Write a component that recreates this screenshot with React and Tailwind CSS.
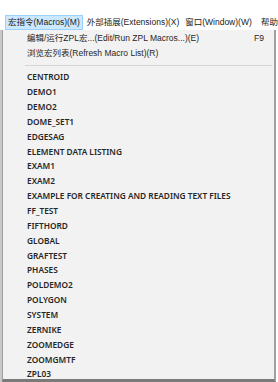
const macros = [
  'CENTROID',
  'DEMO1',
  'DEMO2',
  'DOME_SET1',
  'EDGESAG',
  'ELEMENT DATA LISTING',
  'EXAM1',
  'EXAM2',
  'EXAMPLE FOR CREATING AND READING TEXT FILES',
  'FF_TEST',
  'FIFTHORD',
  'GLOBAL',
  'GRAFTEST',
  'PHASES',
  'POLDEMO2',
  'POLYGON',
  'SYSTEM',
  'ZERNIKE',
  'ZOOMEDGE',
  'ZOOMGMTF',
  'ZPL03',
];

const uiFont = { fontFamily: '"Liberation Sans", "Noto Sans CJK SC", sans-serif' };
const listFont = { fontFamily: '"Noto Sans", "Noto Sans CJK SC", sans-serif' };

export default function App() {
  return (
    <div className="w-[278px] h-[382px] bg-white overflow-hidden text-[#1b1b1b]" style={uiFont}>
      {/* top gap */}
      <div className="h-[15px] bg-white" />

      {/* Menu bar */}
      <div className="h-[15px] flex items-stretch text-[8.5px] leading-none whitespace-nowrap bg-white">
        <div className="ml-[5px] w-[79px] bg-[#cce8ff] border border-[#99d1ff] flex items-center pl-[2px]">
          宏指令(Macros)(M)
        </div>
        <div className="flex items-center pl-[4px] w-[100px]">外部插展(Extensions)(X)</div>
        <div className="flex items-center pl-[4px] w-[77px]">窗口(Window)(W)</div>
        <div className="flex items-center pl-[4px]">帮助</div>
      </div>

      {/* Dropdown */}
      <div className="flex h-[352px]">
        <div className="w-[2px] bg-[#c8c8c8]" />
        <div className="w-[274px] bg-[#f2f2f2] border-l border-r-2 border-b-[3px] border-l-[#a0a0a0] border-r-[#a0a0a0] border-b-[#7a7a7a] pt-[1px] text-[#262626]">
          <div className="h-[15px] flex items-center pl-[24px] pr-[10px] whitespace-nowrap text-[8.5px]">
            <span className="flex-1">编辑/运行ZPL宏...(Edit/Run ZPL Macros...)(E)</span>
            <span>F9</span>
          </div>
          <div className="h-[15px] flex items-center pl-[24px] whitespace-nowrap text-[8.5px]">
            浏览宏列表(Refresh Macro List)(R)
          </div>
          <div className="h-[9px] flex items-center pl-[22px] pr-[2px]">
            <div className="h-px w-full bg-[#d4d4d4]" />
          </div>
          <div style={listFont}>
            {macros.map((m) => (
              <div key={m} className="h-[14.86px] flex items-center pl-[24px] whitespace-nowrap text-[8.3px] font-semibold">
                {m}
              </div>
            ))}
          </div>
        </div>
        <div className="w-[2px] bg-white" />
      </div>
    </div>
  );
}
